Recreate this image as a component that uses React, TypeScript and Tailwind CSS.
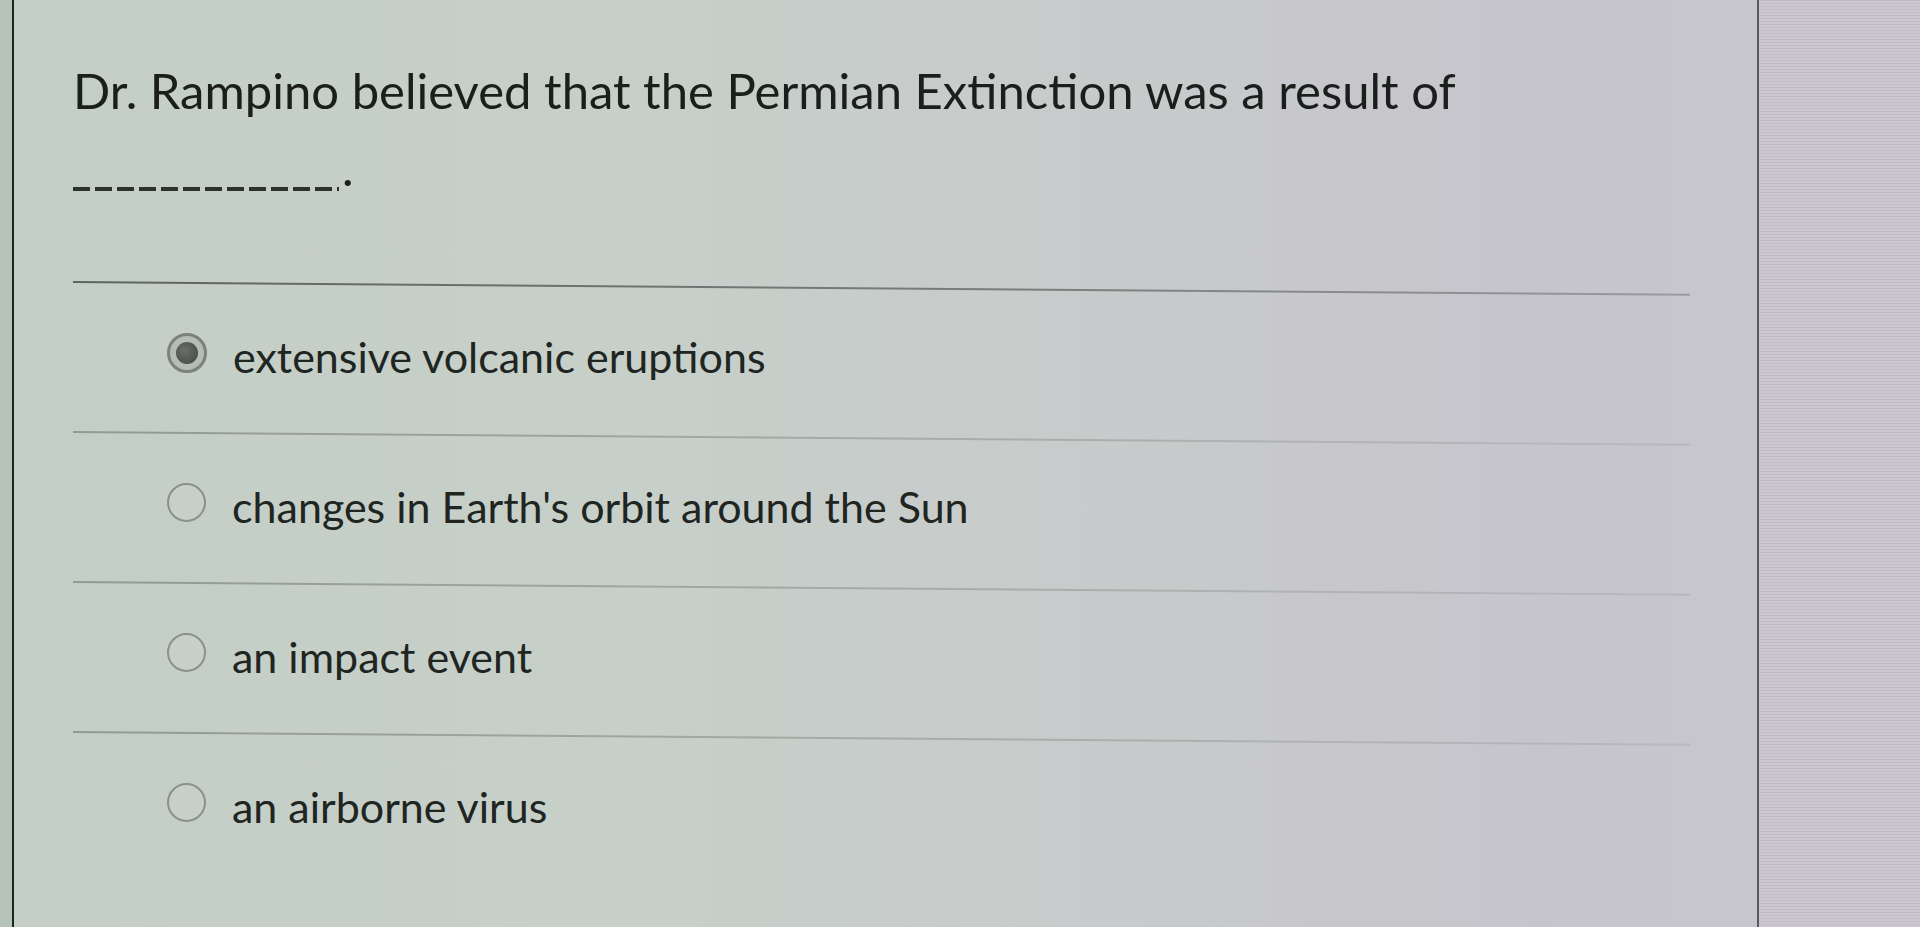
import React from "react";

const options = [
  { label: "extensive volcanic eruptions", selected: true },
  { label: "changes in Earth's orbit around the Sun", selected: false },
  { label: "an impact event", selected: false },
  { label: "an airborne virus", selected: false },
];

function Radio({ selected }: { selected: boolean }) {
  if (selected) {
    return (
      <div className="flex h-[40px] w-[40px] shrink-0 items-center justify-center rounded-full border-[3px] border-[#7b827e] bg-[#b5bbb7]">
        <div className="h-[22px] w-[22px] rounded-full bg-[radial-gradient(circle_at_40%_40%,#6a6f6c,#3f4441)]" />
      </div>
    );
  }
  return <div className="h-[39px] w-[39px] shrink-0 rounded-full border-2 border-[#8a918d] bg-[#cdd3cf]/40" />;
}

export default function App() {
  return (
    <div
      className="flex h-[927px] w-[1920px] overflow-hidden bg-[linear-gradient(90deg,#c3cec6_0%,#c6d0c9_30%,#c8cbcb_55%,#c7c5cc_80%,#c9c6ce_100%)] text-[#1f2421]"
      style={{ fontFamily: "Lato, 'Open Sans', 'Noto Sans', sans-serif" }}
    >
      <div className="w-[12px] shrink-0 bg-[#b6c3b8]" />
      <div className="w-[2px] shrink-0 bg-[#1a241d]" />
      <div className="w-[1743px] shrink-0 pl-[59px] pt-[52px]">
        <p className="text-[49px] leading-[77px] text-[#1a1f1c]">
          Dr. Rampino believed that the Permian Extinction was a result of
          <br />
          <span className="inline-block h-[4px] w-[266px] align-[-5px] bg-[repeating-linear-gradient(90deg,#2c322e_0px,#2c322e_17px,transparent_17px,transparent_22px)]" />
          <span className="ml-[3px]">.</span>
        </p>
        <div className="mt-[75px] w-[1617px]">
          {options.map((o, i) => (
            <div key={o.label}>
              <div
                className={
                  i === 0
                    ? "h-[2px] origin-left rotate-[0.45deg] bg-[linear-gradient(90deg,#5d645f,#7a7f7d_60%,#9a9aa0)]"
                    : "h-[2px] origin-left rotate-[0.45deg] bg-[linear-gradient(90deg,#929a94,#a9aeab_60%,#b9b8be)]"
                }
              />
              <div className="flex h-[148px] items-start pl-[94px] pt-[50px]">
                <Radio selected={o.selected} />
                <span className="ml-[26px] mt-[4px] text-[43px] leading-[40px] text-[#202522]">
                  {o.label}
                </span>
              </div>
            </div>
          ))}
        </div>
      </div>
      <div className="w-[2px] shrink-0 bg-[#575661]" />
      <div className="flex-1 bg-[repeating-linear-gradient(0deg,#cbc8d0_0px,#cbc8d0_2px,#bfbcc5_2px,#bfbcc5_3px)]" />
    </div>
  );
}
